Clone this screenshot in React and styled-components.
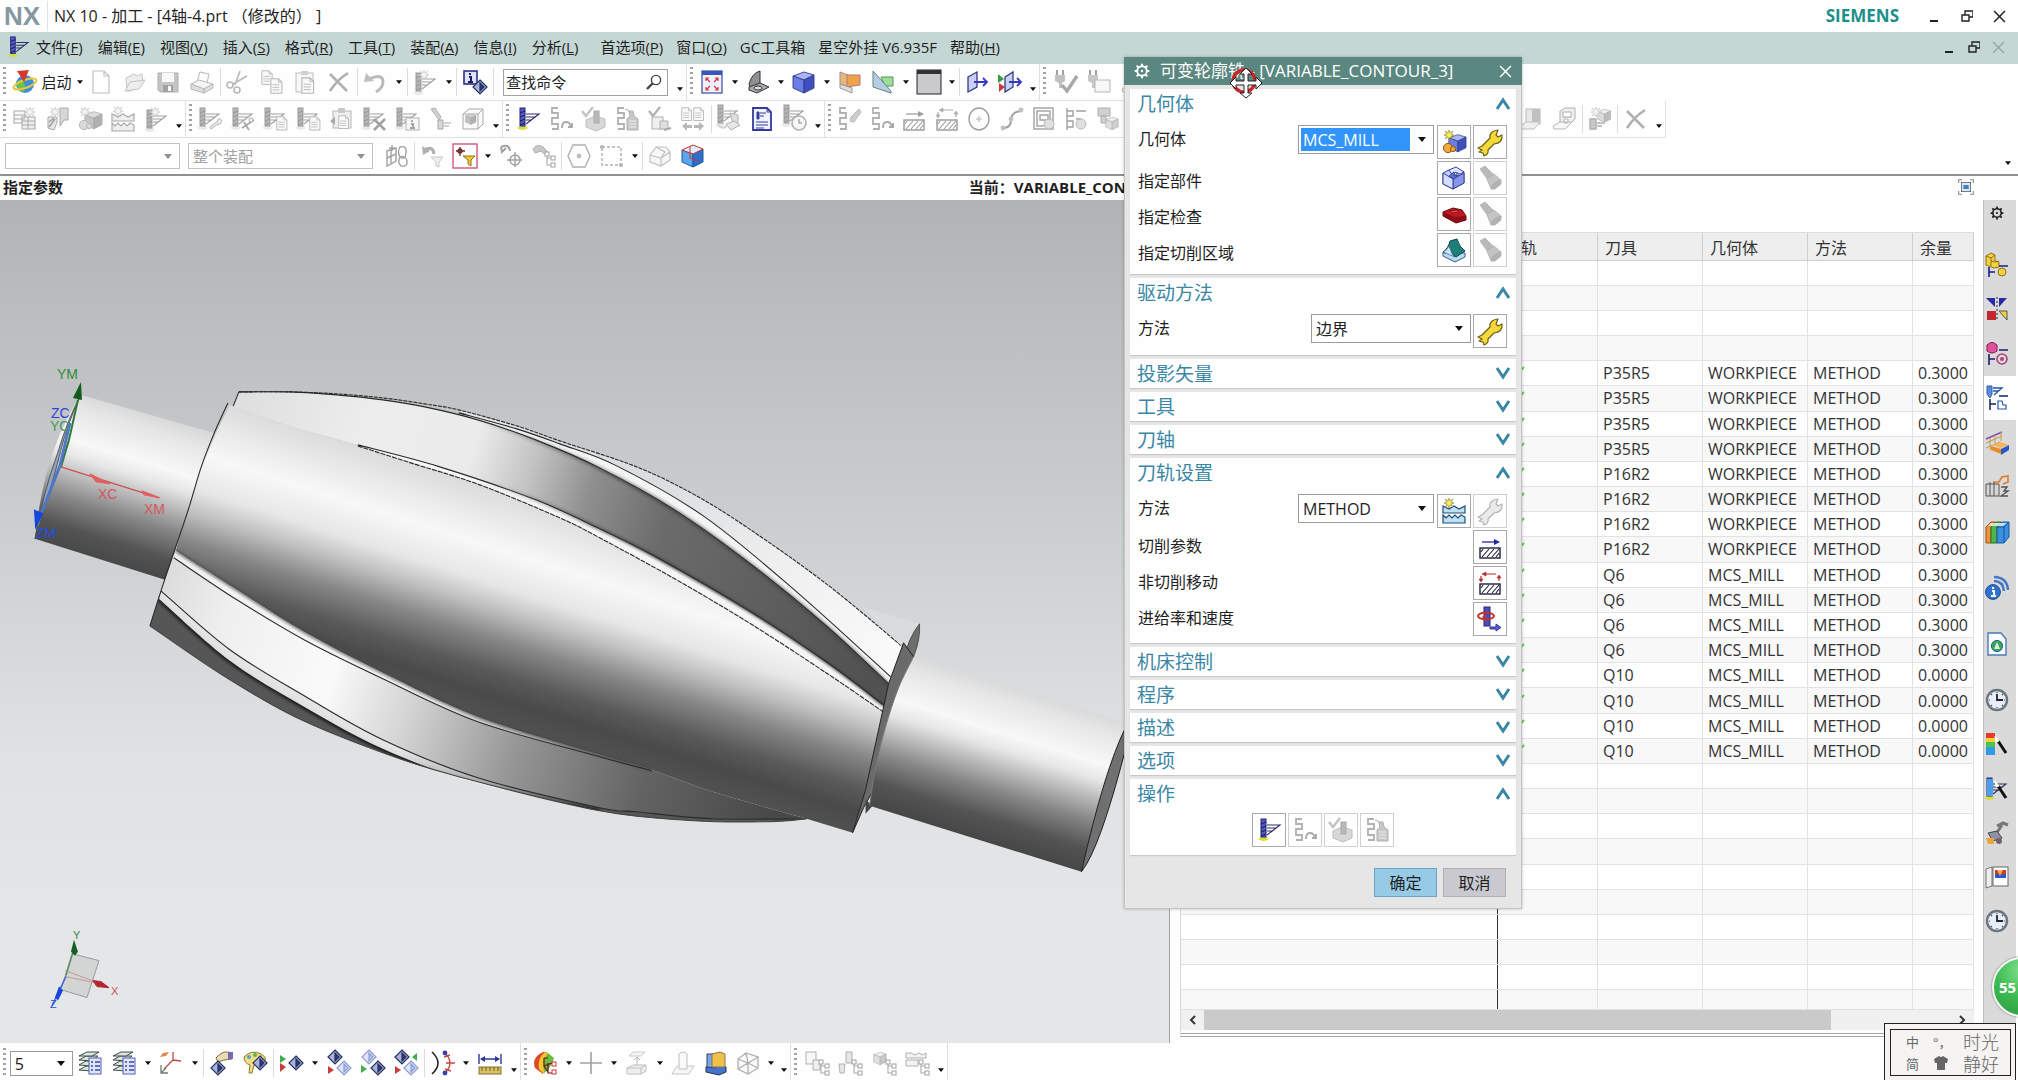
/**
*
* App
*
*/

import React from 'react';
import styled, { createGlobalStyle } from 'styled-components';

const GlobalStyle = createGlobalStyle`
  html, body, #root { height: 100%; }
  body {
    margin: 0;
    overflow: hidden;
    background: #fefefe;
    color: #1f1f1f;
    font: 16px/24px "Open Sans", "Noto Sans CJK SC", sans-serif;
  }
  *, *::before, *::after { box-sizing: border-box; }
  button, select, input { font: inherit; color: inherit; }
`;

/* ---------- icons ---------- */

const outline = { fill: 'none', stroke: '#333', strokeWidth: 1.4 };

const Mill = ({ x = 0, y = 0 }) => (
  <g transform={`translate(${x} ${y})`}>
    <path d="M1 21q6-5 11 0-5 4-11 0z" fill="#d9dc3c" />
    <rect x="4" y="1" width="5" height="18" fill="#5358c4" stroke="#23277a" strokeWidth="1" />
    <path d="M4 6l5-2M4 10l5-2M4 14l5-2M4 18l5-2" stroke="#171b55" strokeWidth="1" />
    <path d="M10 7h13L10 17M10 10h10M10 13h6" fill="none" stroke="#2b2f66" strokeWidth="1.1" />
  </g>
);

const SPath = () => (
  <path d="M9 1H3v5h6v5H3v6h6v5H3" {...outline} stroke="#555" strokeWidth="1.8" />
);

const Spark = ({ x = 0, y = 0 }) => (
  <path
    transform={`translate(${x} ${y})`}
    d="M5 0l1 3 3-2-2 3 3 1-3 1 2 3-3-2-1 3-1-3-3 2 2-3-3-1 3-1-2-3 3 2z"
    fill="#f6ee62"
    stroke="#9c9330"
    strokeWidth=".7"
  />
);

const Page = ({ x = 0, y = 0, s = 1 }) => (
  <g transform={`translate(${x} ${y}) scale(${s})`}>
    <path d="M1 1h9l4 4v13H1z" fill="#f2f4fb" stroke="#5a6080" strokeWidth="1.2" />
    <path d="M10 1v4h4M3 8h8M3 11h8M3 14h8" fill="none" stroke="#5a6080" strokeWidth="1" />
  </g>
);

const Cube = ({ x = 0, y = 0, s = 1, c = ['#a9b5f5', '#6b7de8', '#3f4fc0'] }) => (
  <g transform={`translate(${x} ${y}) scale(${s})`} stroke="#34407f" strokeWidth=".9" strokeLinejoin="round">
    <path d="M1 6l11-4 10 3-10 5z" fill={c[0]} />
    <path d="M1 6l11 4v13L1 18z" fill={c[1]} />
    <path d="M12 10l10-5v13l-10 5z" fill={c[2]} />
  </g>
);

const Diamond = ({ x = 0, y = 0, light }) => (
  <g transform={`translate(${x} ${y})`} stroke={light ? '#8d9bd0' : '#26305f'} strokeWidth="1.2">
    <path d="M7 0l7 7-7 7-7-7z" fill={light ? '#dfe6fb' : '#a8b2da'} />
    <path d="M7 3l4 4-4 4z" fill={light ? '#b9c8f2' : '#2f3d86'} />
  </g>
);

const Tree = ({ x = 0, y = 0 }) => (
  <g transform={`translate(${x} ${y})`} fill="#fff" stroke="#444" strokeWidth="1.1">
    <path d="M2 3v10h4M2 6h4" fill="none" />
    <rect x="0" y="0" width="4" height="4" />
    <rect x="6" y="4" width="4" height="4" />
    <rect x="6" y="11" width="4" height="4" />
  </g>
);

const Hatch = ({ y = 13 }) => (
  <g transform={`translate(0 ${y})`}>
    <rect x="2" y="0" width="20" height="10" fill="#fff" stroke="#1f1f3c" strokeWidth="1.4" />
    <path d="M4 9l7-8M9 9l7-8M14 9l7-8M18 9l3-4M3 4l2-3" stroke="#1f1f3c" strokeWidth="1.1" />
  </g>
);

const Layers = () => (
  <g>
    <g fill="#dbe7dc" stroke="#3b4b46" strokeWidth="1">
      <path d="M1 19l7-4h12l-6 5z" />
      <path d="M1 14l7-4h12l-6 5z" />
      <path d="M1 9l7-4h12l-6 5z" />
      <path d="M1 5l8-4h12l-7 4z" />
    </g>
    <rect x="11" y="7" width="12" height="16" fill="#dfe4fb" stroke="#5361b4" />
    <path d="M13 11h2M17 11h5M13 15h2M17 15h5M13 19h2M17 19h5" stroke="#3c4aa0" strokeWidth="1.4" />
  </g>
);

const Wrench = () => (
  <path
    d="M0 18l4-2 8-8q-1-7 8-8l-2 5 2 2 4-2q1 8-8 9l-6 6q1 4-4 6l-1-3-4-1 3-2z"
    fill="#f3d93a"
    stroke="#6f5f10"
    strokeWidth="1.2"
    strokeLinejoin="round"
  />
);

const ClockFace = () => (
  <g>
    <circle cx="12" cy="12" r="10" fill="#e7eef7" stroke="#6c7680" strokeWidth="2.4" />
    <path d="M12 4v1M12 19v1M4 12h1M19 12h1M6 6l1 1M17 6l1 1M6 18l1-1M17 18l1-1" stroke="#445" strokeWidth="1.2" />
    <path d="M12 6v6h6" fill="none" stroke="#223" strokeWidth="1.8" />
  </g>
);

const Wand = () => (
  <g>
    <path d="M13 9l8 12" stroke="#111" strokeWidth="3" />
    <path d="M10 4l4 5-3 1z" fill="#fff" stroke="#fff" />
  </g>
);

const icons = {
  globe: (
    <g>
      <circle cx="12" cy="14" r="9" fill="#3f8fd8" />
      <path d="M5 10q7 0 7 6t-4 6q-6-4-3-12z" fill="#6cc24a" />
      <ellipse cx="12" cy="14" rx="12" ry="4" fill="none" stroke="#e7c63b" strokeWidth="2" transform="rotate(-20 12 14)" />
      <path d="M4 1l12-1-5 12z" fill="#d63a2c" />
    </g>
  ),
  file: <path d="M4 1h11l5 5v17H4zM15 1v5h5" fill="#fff" stroke="#777" strokeWidth="1.2" />,
  open: (
    <g fill="#e9dcb4" stroke="#8a8060">
      <path d="M3 8l8-4 3 2 5-2 1 9-12 8H4z" />
      <path d="M2 21l5-9 15-2-6 9z" />
    </g>
  ),
  save: (
    <g>
      <path d="M2 3h20v19H4l-2-2z" fill="#7d828c" stroke="#555" />
      <rect x="6" y="3" width="12" height="9" fill="#f4f4f4" />
      <rect x="7" y="15" width="10" height="7" fill="#333" />
      <rect x="12" y="16" width="3" height="5" fill="#eee" />
    </g>
  ),
  print: (
    <g fill="#e8e8e8" stroke="#666">
      <path d="M7 12l3-10 9 2-2 9z" fill="#fff" />
      <path d="M1 14l8-4 14 4-9 5z" />
      <path d="M1 14v5l13 4v-4zM14 19v4l9-5v-4z" fill="#bbb" />
    </g>
  ),
  cut: (
    <g fill="none" stroke="#666" strokeWidth="1.6">
      <path d="M14 1L9 15M21 6L7 14" />
      <circle cx="4" cy="15" r="3" />
      <circle cx="11" cy="20" r="3" />
    </g>
  ),
  copy: <g><Page x={1} y={0} s={0.8} /><Page x={10} y={8} s={0.85} /></g>,
  paste: (
    <g>
      <rect x="3" y="3" width="17" height="19" fill="#eee" stroke="#777" />
      <rect x="8" y="1" width="7" height="4" fill="#999" />
      <Page x={8} y={7} s={0.9} />
    </g>
  ),
  del: <path d="M3 4l17 17M21 3Q10 10 3 21" fill="none" stroke="#555" strokeWidth="2.6" />,
  undo: (
    <g>
      <path d="M6 9q14-6 14 3 0 6-7 10" fill="none" stroke="#5d6c8c" strokeWidth="3" />
      <path d="M1 12l2-9 8 8z" fill="#5b77b4" />
    </g>
  ),
  millNew: <g><Mill x={-1} y={2} /><Spark x={6} y={0} /></g>,
  info: (
    <g>
      <rect x="1" y="1" width="13" height="13" fill="#dfe3fa" stroke="#2c2f88" strokeWidth="1.6" />
      <path d="M7 3v2M6 7h2v5M5 12h5" fill="none" stroke="#1a1d60" strokeWidth="2" />
      <Diamond x={10} y={10} />
    </g>
  ),
  fit: (
    <g>
      <rect x="2" y="1" width="20" height="22" fill="#eef0fb" stroke="#3b49a3" strokeWidth="1.2" />
      <rect x="2" y="1" width="20" height="4" fill="#3b56b4" />
      <path d="M6 11V8h3M6 8l4 4M18 11V8h-3M18 8l-4 4M6 17v3h3M6 20l4-4M18 17v3h-3M18 20l-4-4" fill="none" stroke="#d2393b" strokeWidth="1.2" />
    </g>
  ),
  orient: (
    <g stroke="#333" strokeWidth="1">
      <path d="M3 14Q6 3 14 1v15l-9 4z" fill="#8d9092" />
      <path d="M3 17l11-4 9 4-12 6-8-3z" fill="#a9acae" />
      <ellipse cx="12" cy="18" rx="4" ry="2" fill="#dfe0e1" />
    </g>
  ),
  shade: <Cube />,
  plane: (
    <g>
      <path d="M2 2l8 3v12l-8-3z" fill="#e6b878" stroke="#a88" />
      <path d="M9 5h13v10l-13 2z" fill="#eda34d" stroke="#b77" />
      <path d="M2 14l12 4v5L2 18z" fill="#ddd" stroke="#999" />
    </g>
  ),
  section: (
    <g>
      <path d="M10 7h12v9h-8z" fill="#9fdc9f" stroke="#4c9a4f" />
      <path d="M2 1l18 20v2L2 17z" fill="#b7cbe4" stroke="#5b8b7a" />
    </g>
  ),
  background: <g><rect x="0" y="0" width="24" height="24" fill="#c9cacb" stroke="#222" /><rect width="24" height="4" fill="#333" /></g>,
  clip: (
    <g>
      <path d="M3 7l9-5v15l-9 5z" fill="#c9d0f5" stroke="#333a7a" strokeWidth="1.3" />
      <path d="M9 12h12M18 8l4 4-4 4" fill="none" stroke="#3438c4" strokeWidth="1.8" />
    </g>
  ),
  clipEdit: (
    <g>
      <path d="M0 4l6 5-6 4z" fill="#3a9a44" />
      <path d="M1 13l6 4-6 5z" fill="#cf3b34" />
      <path d="M7 7l8-5v15l-8 5z" fill="#c9d0f5" stroke="#333a7a" strokeWidth="1.3" />
      <path d="M11 12h11M19 8l4 4-4 4" fill="none" stroke="#3438c4" strokeWidth="1.8" />
    </g>
  ),
  plugCheck: <g><path d="M3 0v5M9 0v5" stroke="#333" strokeWidth="2" /><path d="M1 5h10v6l-3 2v5H5v-5l-4-2z" fill="#777" /><path d="M8 15l5 6L23 6" fill="none" stroke="#444" strokeWidth="3.4" /></g>,
  plugBox: <g><path d="M3 0v5M9 0v5" stroke="#333" strokeWidth="2" /><path d="M1 5h10v6l-3 2v5H5v-5l-4-2z" fill="#888" /><rect x="8" y="10" width="15" height="12" fill="#eee" stroke="#666" /></g>,
  program: (
    <g>
      <Spark x={12} y={0} />
      <rect x="1" y="4" width="11" height="12" fill="#eee" stroke="#444" />
      <rect x="9" y="10" width="13" height="12" fill="#ddd" stroke="#444" />
      <path d="M1 8h11M1 12h11M9 14h13M9 18h13M15 10v12" stroke="#444" />
    </g>
  ),
  toolNew: (
    <g>
      <path d="M2 10h9v5l-3 8-6-2z" fill="#ccc" stroke="#444" />
      <path d="M3 20l6-8M3 15l5-4" stroke="#333" strokeWidth="1.6" />
      <path d="M14 1h8v12h-4l-4 6z" fill="#aaa" stroke="#444" />
      <Spark x={4} y={0} />
    </g>
  ),
  geomNew: <g><Cube x={6} y={3} s={0.82} /><circle cx="6" cy="18" r="4.6" fill="#f0a93a" stroke="#8d5b10" /><circle cx="11" cy="19" r="2.6" fill="#f0a93a" stroke="#8d5b10" /><Spark x={2} y={0} /></g>,
  methodNew: (
    <g>
      <path d="M1 7l6 3 5-3 5 3 6-3v7H1z" fill="#bfe1f5" stroke="#1f4d73" strokeWidth="1.2" />
      <path d="M1 16l3 3 3-3 3 3 3-3 3 3 3-3 4 2v6H1z" fill="#bfe1f5" stroke="#1f4d73" strokeWidth="1.2" />
      <Spark x={2} y={-1} />
    </g>
  ),
  millEdit: <g><Mill x={-3} /><path d="M11 20l8-6c-1-3 3-3 4 0-2 1 0 4-4 3l-7 5z" fill="#ddd" stroke="#555" /></g>,
  millCut: <g><Mill x={-3} /><path d="M10 21l12-8M12 15l5 8" stroke="#444" strokeWidth="1.8" /><circle cx="19" cy="13" r="2" fill="#fff" stroke="#444" /></g>,
  millCopy: <g><Mill x={-3} /><Page x={12} y={9} s={0.78} /></g>,
  millPaste: <g><rect x="3" y="4" width="18" height="17" fill="#ddd" stroke="#666" /><rect x="8" y="1" width="7" height="5" fill="#888" /><Page x={8} y={8} s={0.75} /><path d="M0 14l5-4v8z" fill="#444" /></g>,
  millDel: <g><Mill x={-3} /><path d="M11 12l11 11M22 12L11 23" stroke="#333" strokeWidth="2.6" /></g>,
  millInfo: <g><Mill x={-3} /><rect x="10" y="11" width="13" height="12" fill="#eee" stroke="#555" /><path d="M16 13v2M15 17h2v4M14 21h5" fill="none" stroke="#333" strokeWidth="1.8" /></g>,
  torch: (
    <g stroke="#4d506c" strokeWidth=".8">
      <path d="M2 3l5-3 9 9-6 5z" fill="#65687f" />
      <path d="M9 13l7-5 7 6v4l-6 5h-4z" fill="#7c8096" />
      <path d="M13 23q1-7 10-9-1 8-10 9z" fill="#54586e" />
    </g>
  ),
  millTorch: <g><path d="M3 2l4-1 6 9-2 3z" fill="#999" stroke="#555" /><path d="M10 13h5v9h-5zM16 16h7M16 19h5" fill="#aaa" stroke="#444" /></g>,
  stock: <g><path d="M2 7l6-5h14v15l-5 5H2zM2 7h15v15M17 7l5-5" fill="#f6f6f6" stroke="#444" /><Cube x={4} y={6} s={0.5} c={['#999', '#777', '#555']} /></g>,
  mill: <Mill />,
  gen: <g><SPath /><path d="M13 21q0-6 4-6t5 5M19 20h4v-4" fill="none" stroke="#444" strokeWidth="1.8" /></g>,
  verify: (
    <g>
      <path d="M4 13l9-4 10 3v8l-9 4-10-4z" fill="#c9a87c" stroke="#775" />
      <rect x="12" y="4" width="5" height="12" fill="#667" stroke="#445" />
      <path d="M0 4l4 5 7-9" fill="none" stroke="#4a9a3e" strokeWidth="2.6" />
    </g>
  ),
  post: <g><SPath /><path d="M12 12l3-3-1-5h4l1 5 4 3v11H12z" fill="#888" stroke="#555" /><path d="M10 2q4 0 5 4" fill="none" stroke="#555" /><path d="M14 14h7M14 17h7M14 20h7" stroke="#ddd" /></g>,
  verifyPage: <g><path d="M1 4l4 5 7-9" fill="none" stroke="#555" strokeWidth="2.2" /><rect x="4" y="10" width="11" height="12" fill="#ddd" stroke="#555" /><path d="M12 14h8v8h-8z" fill="#bbb" stroke="#555" /><path d="M16 23l7-2" stroke="#444" strokeWidth="2" /></g>,
  compare: <g><Page x={0} y={0} s={0.75} /><Page x={12} y={0} s={0.75} /><path d="M1 19l5-4v3h5v3H6v3zM23 19l-5-4v3h-5v3h5v3z" fill="#666" /></g>,
  shop: <g><Mill x={-3} y={-3} /><path d="M13 6l8 2v8l-5 1z" fill="#bbb" stroke="#555" /><path d="M9 17l8-3 6 4-9 5z" fill="#ccc" stroke="#555" /><path d="M1 18q4 5 9 1" fill="none" stroke="#b79b4a" strokeWidth="2" /></g>,
  doc: (
    <g>
      <path d="M3 1h14l4 4v18H3z" fill="#f0f2ff" stroke="#333a9a" strokeWidth="1.8" />
      <path d="M17 1v4h4M6 15h12M6 18h12M6 21h8" fill="none" stroke="#333a9a" strokeWidth="1" />
      <path d="M7 5h2v7H7zM10 6h6M10 9h4" fill="#333a9a" stroke="#333a9a" />
    </g>
  ),
  millClock: <g><Mill x={-3} y={-3} /><circle cx="16" cy="16" r="7" fill="#eee" stroke="#555" strokeWidth="1.6" /><path d="M16 12v4h3" fill="none" stroke="#444" strokeWidth="1.4" /></g>,
  pathTorch: <g><SPath /><path d="M22 2l-8 8-1 4 4 1 7-10z" fill="#8d93bb" stroke="#5c6192" /></g>,
  cutParam: <g><Hatch /><path d="M4 7h14" fill="none" stroke="#24249c" strokeWidth="1.3" /><path d="M16 4l6 3-6 3z" fill="#24249c" /></g>,
  nonCut: <g><Hatch /><path d="M3 9V5M6 3h12M21 10V6" fill="none" stroke="#b32a2a" strokeWidth="1.2" /><path d="M1 8l2 3 2-3zM8 1L4 3l4 2zM19 7l2-3 2 3z" fill="#b32a2a" stroke="#b32a2a" strokeWidth=".6" /></g>,
  feeds: (
    <g>
      <rect x="6" y="0" width="6" height="19" fill="#4a4fb8" stroke="#23277a" />
      <ellipse cx="8" cy="9" rx="8" ry="3.4" fill="none" stroke="#c2332f" strokeWidth="2" />
      <path d="M4 10l4 5 0-8z" fill="#c2332f" />
      <path d="M12 20h6v-3l5 3.500-5 3.500v-2h-6z" fill="#5a5fd0" stroke="#333a9a" />
    </g>
  ),
  circle: <g><ellipse cx="12" cy="12" rx="10" ry="11" {...outline} /><path d="M12 9v6M9 12h6" stroke="#a98a2f" strokeWidth="1.6" /></g>,
  spline: <g><path d="M3 21q8 0 8-8t10-9" {...outline} strokeWidth="2" /><circle cx="3" cy="21" r="2.4" fill="#875" /><circle cx="21" cy="3" r="2.4" fill="#875" /><circle cx="11" cy="12" r="2.4" fill="#875" /></g>,
  pocket: <g><rect x="2" y="1" width="19" height="21" {...outline} /><rect x="5" y="4" width="13" height="15" {...outline} /><path d="M8 8h8v5H8z" {...outline} /><circle cx="17" cy="17" r="5" fill="#bbb" stroke="#666" /></g>,
  levels: <g><path d="M3 1v22M3 4h6v5H3M3 14h6v6H3M12 4h10M12 12h5" {...outline} /><circle cx="17" cy="17" r="5" fill="#bbb" stroke="#666" /></g>,
  gouge: <g><Cube x={8} y={9} s={0.6} c={['#ddd', '#bbb', '#999']} /><path d="M1 1h12v8H1zM4 9v7h5V9z" fill="#999" stroke="#555" /></g>,
  machine: <g><rect x="7" y="2" width="14" height="15" fill="#ccc" stroke="#666" /><rect x="13" y="2" width="8" height="15" fill="#777" /><path d="M1 19l6-4h14l-6 7H3z" fill="#ddd" stroke="#777" /></g>,
  simulate: <g><path d="M8 4l5-3h10v11l-4 4H8z" fill="#ddd" stroke="#555" /><rect x="11" y="5" width="8" height="5" fill="#fff" stroke="#644" /><path d="M12 12h4v4h-4zM1 19l7-4h12l-7 7H2z" fill="#eee" stroke="#666" /></g>,
  featureNew: <g><Cube x={9} y={1} s={0.62} c={['#cde', '#9bb', '#577']} /><Spark x={3} y={0} /><path d="M2 12h6v10H2zM9 16h8M9 19h5" fill="#888" stroke="#555" strokeWidth="1.4" /></g>,
  sketchLink: <g><path d="M2 7l9-3v13l-9 5zM2 14l9-4M6 5v15M7 1v6M4 4h7" {...outline} /><path d="M15 3q7-2 6 6t-6 4q-3-5 0-10zM15 13q6-2 7 4t-6 5q-4-4-1-9z" {...outline} /></g>,
  filterUndo: <g><path d="M2 2l1 9 7-4z" fill="#555" /><path d="M4 6q9-5 10 4" fill="none" stroke="#555" strokeWidth="3" /><path d="M11 13h12l-4 5v5l-3-1v-4z" fill="#ddd" stroke="#888" /></g>,
  filter: (
    <g>
      <rect x="0" y="0" width="24" height="24" fill="#fff" stroke="#d0587c" strokeWidth="1.4" />
      <path d="M7 3v9M3 7h9M5 7a2 2 0 0 0 4 0 2 2 0 0 0-4 0" fill="none" stroke="#702a2a" strokeWidth="1.3" />
      <path d="M10 12h12l-4 4v6l-3-2v-4z" fill="#f0c93a" stroke="#8c7218" />
    </g>
  ),
  snapBack: <g><path d="M2 3q8-4 9 4M2 3l1 5 4-4" {...outline} strokeWidth="2" /><circle cx="16" cy="16" r="5" {...outline} /><path d="M16 8v15M8 16h15" {...outline} /></g>,
  snapTree: <g><path d="M1 5q4-6 10-2l4 4-3 3-3-3-6 2z" fill="#888" stroke="#555" /><Tree x={13} y={8} /></g>,
  hexagon: <g><path d="M6 1h12l5 11-5 11H6L1 12z" fill="#fff" stroke="#555" strokeWidth="1.4" /><circle cx="12" cy="12" r="2.4" fill="#a66" /></g>,
  lasso: <g><rect x="2" y="3" width="19" height="18" fill="none" stroke="#555" strokeDasharray="3 2" strokeWidth="1.4" /><circle cx="2" cy="3" r="2" fill="#755" /><circle cx="21" cy="21" r="2" fill="#755" /></g>,
  solidEdge: <path d="M2 11l6-8h10l4 5v8l-9 6-11-4zM2 11l11 3 9-6M13 14v8M8 3l9 5-4 6" fill="#eee" stroke="#777" strokeWidth="1.2" />,
  boxWire: (
    <g>
      <path d="M1 6l11 4v13L1 18z" fill="#5aa7ee" stroke="#205b9c" />
      <path d="M12 10l10-5v13l-10 5z" fill="#2f6fcb" stroke="#205b9c" />
      <path d="M1 6l11-5 10 4-10 5z" fill="#dfeefb" stroke="#b33" />
      <path d="M9 2v12l8 3" fill="none" stroke="#c33" strokeWidth="1" />
    </g>
  ),
  layers: <Layers />,
  wcs: <g><path d="M14 9l8 1M14 9V1M14 9L5 18" fill="none" stroke="#c24b43" strokeWidth="1.3" /><path d="M2 14v8h7M2 22l5-5" fill="none" stroke="#6d7a73" strokeWidth="1.3" /><path d="M1 6l3-4 6-1-3 4z" fill="#e08850" /></g>,
  showHand: <g><path d="M6 7q6-7 12-6l4 1v6l-8 1-6 2z" fill="#e9dcb0" stroke="#867040" /><rect x="18" y="1" width="5" height="7" fill="#7569b5" /><Diamond x={1} y={10} /></g>,
  palette: <g><path d="M1 6q8-8 17-3t0 10l-7 1-2 8H6l1-8Q1 12 1 6z" fill="#f0df82" stroke="#8a7b2c" /><circle cx="6" cy="6" r="2" fill="#4aa5d8" /><circle cx="12" cy="4" r="2" fill="#57b35b" /><Diamond x={10} y={5} /></g>,
  moveObj: <g><path d="M0 4l6 4-6 4z" fill="#3fae4d" /><path d="M0 12l6 4-6 5z" fill="#c63f3a" /><Diamond x={9} y={5} /></g>,
  hideObj: <g><Diamond x={1} y={-1} /><Diamond x={10} y={10} light /><path d="M1 15l6 4-6 4z" fill="#c63f3a" /></g>,
  showObj: <g><Diamond x={1} y={-1} light /><Diamond x={10} y={10} /><path d="M0 14l6 4-6 4z" fill="#3fae4d" /></g>,
  swapObj: <g><Diamond x={1} y={-1} /><Diamond x={10} y={10} light /><path d="M1 15l6 4-6 4z" fill="#c63f3a" /><path d="M23 2l-5 4 5 4z" fill="#3fae4d" /></g>,
  curve: <g><path d="M1 1q12 11 0 22" fill="none" stroke="#222" strokeWidth="1.6" /><path d="M13 1q12 11 0 22M13 6l6-2M14 18l6 2M15 12h9" fill="none" stroke="#c24b43" strokeWidth="1.4" /><circle cx="14" cy="2" r="2.4" fill="#3a3fb0" /><circle cx="14" cy="22" r="2.4" fill="#3a3fb0" /></g>,
  measure: <g><path d="M1 3v10M23 3v10M3 8h18" fill="none" stroke="#33379c" strokeWidth="1.4" /><path d="M7 5L2 8l5 3zM17 5l5 3-5 3z" fill="#33379c" /><rect x="1" y="16" width="22" height="7" fill="#d8c163" stroke="#837030" /><path d="M4 16v4M8 16v4M12 16v4M16 16v4M20 16v4" stroke="#6b5a20" /></g>,
  analysis: (
    <g>
      <path d="M9 1q-12 6-8 16l8 6q3-10 4-22z" fill="#e0482c" />
      <path d="M11 1q-8 6-6 17l5 5q7-8 6-20z" fill="#f2c933" />
      <path d="M14 2q-6 7-4 20 8-6 10-15z" fill="#6fbb3c" />
      <path d="M10 7v8l4 6M10 15l8-3M14 12v10h8M10 7h4" fill="none" stroke="#612" strokeWidth="1.2" />
      <rect x="18" y="11" width="4" height="4" fill="#fff" stroke="#c33" />
      <rect x="18" y="19" width="4" height="4" fill="#fff" stroke="#c33" />
    </g>
  ),
  plus: <path d="M12 1v22M1 12h22" stroke="#333" strokeWidth="1.6" />,
  extrude: <g><path d="M4 5l4-4h12l-4 4z" fill="#f4e7dc" stroke="#a88" /><path d="M12 6v8M9 9l3-3 3 3" fill="none" stroke="#567" /><path d="M2 17l6-3h13v6l-5 3H2zM2 17h14v6M16 17l5-3" fill="#ddd" stroke="#777" /></g>,
  boss: <g><path d="M1 23l5-8h17l-5 8z" fill="#eee" stroke="#888" /><path d="M8 3v15h8V3q-4-4-8 0z" fill="#f4f4f4" stroke="#777" /></g>,
  blockBody: <g><path d="M2 16l6-3 14 3v5l-7 3-13-3z" fill="#4574cf" stroke="#234" /><path d="M3 3h9v14l-9-1z" fill="#7ba6ea" stroke="#345" /><path d="M8 3l8-2 5 2v13H8z" fill="#efc04a" stroke="#875" /></g>,
  meshBody: <path d="M2 8l8-6 12 4v11l-10 6L2 18zM2 8l10 4 10-6M12 12v11M2 18l10-6M12 12l10 5M10 2l2 10" fill="#f4f4f4" stroke="#555" strokeWidth="1.3" />,
  viewProgram: <g><rect x="1" y="1" width="10" height="12" fill="#eee" stroke="#555" /><path d="M8 9h7v10H8z" fill="#ddd" stroke="#555" /><Tree x={14} y={9} /></g>,
  viewTool: <g><path d="M8 1h6v11H8zM1 13h6l-1 9H2z" fill="#ccc" stroke="#555" /><Tree x={14} y={9} /></g>,
  viewGeom: <g><Cube x={1} y={0} s={0.6} c={['#ddd', '#bbb', '#888']} /><Tree x={14} y={9} /></g>,
  viewMethod: <g><path d="M1 2v5h20V2l-3 2-4-2-4 2-4-2zM1 9v6h12V9z" fill="#e6e6e6" stroke="#555" /><Tree x={14} y={9} /></g>,
  wrench: <Wrench />,
  part: (
    <g stroke="#39459c" strokeWidth="1" strokeLinejoin="round">
      <path d="M1 7l6-3 4 2v4l4-2V3l7 3v11l-11 6-10-5z" fill="#c5cffa" />
      <path d="M11 13l11-6v10l-11 6z" fill="#8796ea" />
      <path d="M1 7l10 6v10L1 18z" fill="#d5dcfc" />
      <path d="M7 4l7-3 8 5-4 2-5-2-2 4z" fill="#e2e7fd" />
      <path d="M7 10l5-4v4l5-1-5 4z" fill="#6273d8" />
    </g>
  ),
  check: <g><path d="M1 10l10-4 9 2 4 6v4l-10 3-13-7z" fill="#c31822" stroke="#5d0a10" /><path d="M1 10l12 5 11-1v4l-10 3L1 14z" fill="#8d0d15" /><path d="M8 9l7-1 2 2-7 1z" fill="#e0434a" stroke="#5d0a10" strokeWidth=".6" /></g>,
  cutArea: <g><path d="M1 14v4l12 6 10-5v-4z" fill="#bcd9f2" stroke="#2f5f8d" /><path d="M1 14q5-3 7-11l7-2q2 8 8 12l-9 6q-5-3-7-8-2 6-6 3z" fill="#1d8078" stroke="#0d4844" /><path d="M1 14q4-2 6-6l2 5q1 4 4 6z" fill="#cfe3f6" stroke="#2f5f8d" strokeWidth=".7" /></g>,
  gear: (
    <g>
      <path d="M12 1v22M1 12h22M4 4l16 16M20 4L4 20" stroke="currentColor" strokeWidth="3" />
      <circle cx="12" cy="12" r="8.6" fill="currentColor" />
      <circle cx="12" cy="12" r="5.8" fill="var(--hole)" />
      <circle cx="12" cy="12" r="1.8" fill="currentColor" />
    </g>
  ),
  assembly: <g><path d="M1 3l5-3 4 2v6l4 1v5l-5 1-8-3z" fill="#f2cf3e" stroke="#8e7613" /><path d="M1 3l5 2v8M6 5l4-3M6 8l4 1 4-1" fill="none" stroke="#8e7613" /><path d="M4 14v10M4 19h6M14 13h9" stroke="#1c1c8c" strokeWidth="1.6" /><circle cx="17" cy="19" r="4" fill="#f2cf3e" stroke="#8e7613" /></g>,
  constraint: <g><path d="M1 1l9 9V1zM22 1l-8 9v-9z" fill="#2a2aa6" /><path d="M12 0v24" stroke="#222" strokeDasharray="2 2" /><path d="M2 14h9v9H2z" fill="#c3262c" /><path d="M14 14h8v9z" fill="#f2cf3e" stroke="#555" /></g>,
  partNav: <g><path d="M2 4q5-5 10 0v6q-5 4-10 0z" fill="#e0529a" stroke="#7d1d50" /><path d="M14 9h9M4 13v11M4 18h6" stroke="#1c1c6c" strokeWidth="1.6" /><circle cx="17" cy="18" r="5" fill="none" stroke="#b0417d" strokeWidth="1.6" /><circle cx="17" cy="18" r="2" fill="#b0417d" /></g>,
  opNav: <g><path d="M2 0h5v8l-2 4-3-4z" fill="#5b8fdd" stroke="#2a5cae" /><path d="M8 2h9l-8 7M8 5h6" fill="none" stroke="#2555a8" strokeWidth="1.3" /><path d="M14 10h9M5 13v11M5 18h6" fill="none" stroke="#12225a" strokeWidth="1.5" /><path d="M13 15h4l1 4h3v4h-8z" fill="none" stroke="#2555a8" strokeWidth="1.2" /></g>,
  feature: <g><path d="M1 8l16-7" stroke="#8750a6" strokeWidth="1.6" /><path d="M1 12l16-7M1 17l14-6M5 7v12M10 4v10M16 1v9" stroke="#c79a52" fill="none" strokeWidth="1" /><path d="M8 14l8-3 8 3-9 3z" fill="#f9b35a" /><path d="M6 15l10 3v5l-10-4z" fill="#e8892a" /><path d="M16 18v6l8-5v-5z" fill="#2c57c4" /></g>,
  machineNav: <g><path d="M8 7h6l3-5 6-1v6l-5 2" fill="none" stroke="#e07a2a" strokeWidth="1.6" /><path d="M1 9h13v12H1zM5 7v14M9 7v14" fill="#d5d5d5" stroke="#555" /><path d="M16 12h6l-3 4h4l-7 5h7" fill="none" stroke="#555" strokeWidth="1.4" /></g>,
  books: <g><path d="M1 7l5-5h4L6 7v16H1z" fill="#f2913a" stroke="#9c5310" /><path d="M6 7l5-5h5l-4 5v16H6z" fill="#4cb748" stroke="#22702a" /><path d="M12 7l5-5h7v15l-5 6h-7z" fill="#3a8fe0" stroke="#1b579c" /><path d="M6 3h16l-4 3H3z" fill="#f2f2f2" opacity=".8" /><path d="M12 7h7v15M19 7l5-5" fill="none" stroke="#1b579c" /></g>,
  feed: <g><circle cx="8" cy="16" r="7.4" fill="#2f72cf" stroke="#1d4c93" /><path d="M8 11v2M7 15h2v5M6 20h5" fill="none" stroke="#fff" strokeWidth="2" /><path d="M9 5q9 0 10 10M9 1q13 0 14 13" fill="none" stroke="#4877c4" strokeWidth="2.4" /></g>,
  web: <g><path d="M3 1h13l5 6v16H3z" fill="#fafcff" stroke="#4a7ab5" strokeWidth="1.4" /><circle cx="12" cy="14" r="5.6" fill="#3ea35a" stroke="#1c6a8f" /><path d="M9 17l3-7 3 7z" fill="#d8efe0" /></g>,
  clock: <ClockFace />,
  spectrum: <g><rect x="1" y="1" width="9" height="6" fill="#e8392e" /><rect x="1" y="6" width="9" height="5" fill="#f3d32f" /><rect x="1" y="10" width="9" height="6" fill="#48c54a" /><rect x="1" y="15" width="9" height="8" fill="#2d9be8" /><Wand /></g>,
  millWand: <g><Mill x={-2} /><rect x="2" y="2" width="6" height="17" fill="#4a9fe8" /><Wand /></g>,
  robot: <g><path d="M12 5l6-3 5 2M17 4l-6 9" fill="none" stroke="#777" strokeWidth="3" /><path d="M3 12l9-2 5 7-9 3z" fill="#8d93a3" stroke="#445" /><path d="M1 17h8v6H3z" fill="#e9a43c" /><circle cx="14" cy="20" r="3" fill="#7a5f70" /></g>,
  roles: <g><path d="M1 4l6-2v19l-6 2z" fill="#eee" stroke="#777" /><rect x="8" y="2" width="15" height="19" fill="#fff" stroke="#666" /><rect x="10" y="5" width="11" height="4" fill="#d6352b" /><rect x="10" y="9" width="11" height="4" fill="#2d58c9" /><path d="M12 5h6l-3 6z" fill="#f4b13a" /></g>,
  dock: <g><path d="M1 6V1h5M18 1h5v5M1 18v5h5M23 18v5h-5" fill="none" stroke="#888" strokeWidth="1.6" /><rect x="5" y="5" width="14" height="14" fill="#dbe8f7" stroke="#345" /><rect x="8" y="9" width="8" height="6" fill="#4d80bd" /></g>,
};

const Svg = styled.svg`
  display: block;
  flex: none;
  overflow: visible;
  filter: ${p => (p.$off ? 'grayscale(1) opacity(0.46)' : 'none')};
`;

const Icon = ({ name, off, size = 24 }) => (
  <Svg viewBox="0 0 24 24" width={size} height={size} $off={off} aria-hidden="true">{icons[name]}</Svg>
);

/* ---------- top chrome ---------- */

const Screen = styled.div`
  display: flex;
  flex-direction: column;
  height: 100vh;
  position: relative;
  overflow: hidden;
`;

const TitleBar = styled.header`
  display: flex;
  align-items: center;
  height: 32px;
  padding: 0 3px 0 4px;
`;

const Logo = styled.span`
  width: 44px;
  margin-right: 6px;
  border-right: 1px solid #e2e2e2;
  color: #8597a1;
  font: 700 26px/30px "Liberation Sans", sans-serif;
`;

const Title = styled.h1`
  margin: 0;
  flex: 1;
  font-size: 16px;
  font-weight: 400;
  white-space: pre;
`;

const Brand = styled.span`
  color: #1b8f8a;
  font-size: 17px;
  font-weight: 700;
  margin-right: 20px;
`;

const WindowButton = styled.button`
  display: grid;
  place-items: center;
  width: ${p => (p.$narrow ? 24 : 32)}px;
  height: 28px;
  padding: 0;
  border: 0;
  background: none;
  color: ${p => (p.$faint ? '#98a8a7' : '#222')};
`;

const MenuBar = styled.nav`
  display: flex;
  align-items: center;
  height: 32px;
  padding: 0 8px 2px 7px;
  background: #c5d7d5;
`;

const MenuList = styled.div`
  display: flex;
  flex: 1;
  padding-left: 7px;
`;

const MenuItem = styled.button`
  padding: 0;
  margin-right: ${p => p.$gap}px;
  border: 0;
  background: none;
  font-size: 15px;
  white-space: nowrap;
`;

const Spacer = styled.span`
  flex: 1;
`;

const Grip = styled.span`
  flex: none;
  width: 3px;
  height: 30px;
  margin: 0 2px 0 3px;
  background: repeating-linear-gradient(#a2a2a2 0 2px, transparent 2px 5px);
`;

const Bar = styled.div`
  display: flex;
  height: 37px;
`;

const Group = styled.div`
  display: flex;
  flex: none;
  align-items: center;
  justify-content: space-between;
  width: ${p => p.$w}px;
  padding-top: ${p => (p.$bottom ? 3 : 0)}px;
  border-right: 1px solid #e0e0e0;
  border-bottom: ${p => (p.$bottom ? '0' : '1px solid #e0e0e0')};
`;

const ToolButton = styled.button`
  display: grid;
  place-items: center;
  flex: none;
  width: 32px;
  height: 32px;
  padding: 0;
  border: 0;
  background: none;
`;

const StartButton = styled(ToolButton)`
  display: flex;
  align-items: center;
  gap: 5px;
  width: 74px;
  padding-left: 3px;
  font-size: 15px;
`;

const Divider = styled.span`
  flex: none;
  width: 1px;
  height: 28px;
  background: #dcdcdc;
`;

const CaretButton = styled.button`
  display: grid;
  place-items: center;
  flex: none;
  width: 12px;
  height: 32px;
  padding: ${p => (p.$low ? '14px 0 0' : '0')};
  border: 0;
  background: none;
`;

const Caret = ({ color = '#111', w = 6 }) => (
  <svg width={w} height={w === 6 ? 4 : 5} viewBox="0 0 8 5" aria-hidden="true"><path d="M0 0h8L4 5z" fill={color} /></svg>
);

const SearchBox = styled.label`
  display: flex;
  flex: none;
  align-items: center;
  width: 165px;
  height: 27px;
  padding: 0 5px 0 2px;
  margin: 0 4px 0 8px;
  border: 1px solid #a3a3a3;
  background: #fff;
`;

const SearchInput = styled.input`
  flex: 1;
  min-width: 0;
  padding: 0;
  border: 0;
  outline: 0;
  background: none;
  font-size: 15px;

  &::placeholder { color: #222; opacity: 1; }
`;

const SelectWrap = styled.span`
  position: relative;
  display: flex;
  flex: none;
  align-items: center;
  width: ${p => p.$w}px;
  height: ${p => p.$h || 29}px;
  border: 1px solid ${p => (p.$off ? '#c2c2c2' : '#9b9b9b')};
  background: #fff;
  color: ${p => (p.$off ? '#a0a0a0' : '#222')};

  svg {
    position: absolute;
    right: 7px;
    pointer-events: none;
  }
`;

const NativeSelect = styled.select`
  appearance: none;
  width: 100%;
  height: 100%;
  padding: 0 22px 0 4px;
  border: 0;
  outline: 0;
  opacity: 1;
  background: ${p => (p.$picked ? 'linear-gradient(#3295fc, #3295fc) 2px center / calc(100% - 25px) 23px no-repeat' : 'none')};
  color: ${p => (p.$picked ? '#fff' : 'inherit')};
  font-size: ${p => p.$size || 16}px;
`;

const Dropdown = ({ label, id, value, w, h, off, picked, size }) => (
  <SelectWrap $w={w} $h={h} $off={off}>
    <NativeSelect id={id} aria-label={label} disabled={off} $picked={picked} $size={size}>
      <option>{value}</option>
    </NativeSelect>
    <Caret color={off ? '#909090' : '#111'} w={8} />
  </SelectWrap>
);

/* a leading "~" marks a greyed-out command */
const Tools = ({ items }) => items.map((item, i) => {
  if (item === '|') return <Divider key={i} />;
  if (item === 'v' || item === 'V') {
    return <CaretButton key={i} $low={item === 'V'} aria-label="More"><Caret /></CaretButton>;
  }
  const off = item[0] === '~';
  const name = off ? item.slice(1) : item;
  return <ToolButton key={i} aria-label={name}><Icon name={name} off={off} /></ToolButton>;
});

const menus = [
  ['文件', 'F', 15], ['编辑', 'E', 15], ['视图', 'V', 15], ['插入', 'S', 15], ['格式', 'R', 15], ['工具', 'T', 15], ['装配', 'A', 15],
  ['信息', 'I', 15], ['分析', 'L', 22], ['首选项', 'P', 13], ['窗口', 'O', 13], ['GC工具箱', '', 13], ['星空外挂 V6.935F', '', 13], ['帮助', 'H', 0],
];

const standardTools = ['~file', '~open', '~save', '~print', '|', '~cut', '~copy', '~paste', '~del', '|', '~undo', 'v', '|', '~millNew', 'v', '|', 'info', '|'];
const viewTools = ['fit', 'v', 'orient', 'v', 'shade', 'v', 'plane', 'section', 'v', 'background', 'v', '|', 'clip', 'clipEdit', 'V'];
const plugTools = ['~plugCheck', '~plugBox', '~simulate'];
const insertTools = ['~program', '~toolNew', '~geomNew', '~methodNew', '~millNew', 'V'];
const editTools = ['~millEdit', '~millCut', '~millCopy', '~millCopy', '~millPaste', '~millDel', '~millInfo', '~millTorch', '~stock', 'V'];
const opTools = ['mill', '~gen', '~verify', '~post', '~verifyPage', '~compare', '|', '~shop', 'doc', '~millClock', 'V'];
const pathTools = ['~pathTorch', '~gen', '~cutParam', '~nonCut', '~circle', '~spline', '~pocket', '~levels', '~gouge', '~pocket', '~levels', '~gouge', '~machine', '~simulate', '~stock', '~pocket', '~levels', '~gouge', '~machine', '~simulate', '~stock'];
const machineTools = ['~machine', '~simulate', '|', '~featureNew', '|', '~del', 'V'];
const selectionTools = ['~sketchLink', '|', '~filterUndo', 'filter', 'v', '~snapBack', '~snapTree', '|', '~hexagon', '~lasso', 'v', '|', '~solidEdge', 'boxWire'];

const WinGlyph = ({ kind, size = 12 }) => (
  <svg width={size} height={size} viewBox="0 0 12 12" fill="none" stroke="currentColor" strokeWidth="1.4" aria-hidden="true">
    {kind === 'min' && <path d="M1 11h8" strokeWidth="2" />}
    {kind === 'max' && <path d="M1 5h7v6H1zM4 5V1h8v6H8" />}
    {kind === 'close' && <path d="M1 1l10 10M11 1L1 11" />}
  </svg>
);

const WindowButtons = ({ inner }) => (
  <React.Fragment>
    <WindowButton $narrow={inner} aria-label="Minimize"><WinGlyph kind="min" /></WindowButton>
    <WindowButton $narrow={inner} aria-label="Restore"><WinGlyph kind="max" /></WindowButton>
    <WindowButton $narrow={inner} aria-label="Close" $faint={inner}><WinGlyph kind="close" size={13} /></WindowButton>
  </React.Fragment>
);

const SelectionBar = styled.div`
  display: flex;
  align-items: center;
  gap: 8px;
  height: 38px;
  padding: 0 4px 0 5px;
  border-bottom: 2px solid #8d918f;
`;

const SelectionTools = styled.div`
  display: flex;
  align-items: center;
  gap: 1px;
`;

const CueLine = styled.div`
  display: flex;
  align-items: center;
  height: 24px;
  padding: 0 44px 2px 3px;
  font-size: 15px;
  font-weight: 700;
`;

const Cue = styled.span`
  flex: 0 0 49%;
`;

/* ---------- model view ---------- */

const Main = styled.main`
  display: flex;
  flex: 1;
  min-height: 0;
`;

const Viewport = styled.section`
  flex: 0 0 58%;
  min-width: 0;
  overflow: hidden;
  border-right: 1px solid #9da3a5;
  background: linear-gradient(#b2b3b4 0%, #bdbfc0 17%, #cdd0d1 41%, #dfe1e2 65%, #e4e6e8 85%, #e4e6e8 100%);
`;

const Scene = styled.svg`
  display: block;
  width: 100%;
  height: 100%;
`;

const Stops = ({ list }) => list.map(([o, c]) => <stop key={o} offset={o} stopColor={c} />);

/* smooth curve through a list of points */
const through = (pts, start = 'M') => {
  let d = `${start}${pts[0].join(' ')}`;
  for (let i = 0; i < pts.length - 1; i += 1) {
    const a = pts[i - 1] || pts[i];
    const b = pts[i];
    const c = pts[i + 1];
    const e = pts[i + 2] || c;
    const c1 = [b[0] + ((c[0] - a[0]) / 6), b[1] + ((c[1] - a[1]) / 6)];
    const c2 = [c[0] - ((e[0] - b[0]) / 6), c[1] - ((e[1] - b[1]) / 6)];
    d += `C${c1.join(' ')} ${c2.join(' ')} ${c.join(' ')}`;
  }
  return d;
};
const between = (top, bottom) => `${through(top)}${through([...bottom].reverse(), 'L')}z`;

const crestTop = [[239, 392], [291, 392], [337, 394], [383, 398], [425, 404], [459, 410], [517, 426], [560, 441], [637, 467], [695, 495], [751, 530], [828, 585], [903, 647]];
const crestIn = [[459, 413], [517, 429], [560, 444], [617, 466], [705, 517], [797, 592], [891, 677]];
const crestLow = [[239, 392], [291, 392], [337, 395], [383, 400], [425, 407], [478, 420], [536, 440], [600, 468], [675, 510], [751, 564], [828, 627], [889, 684]];
const landTop = [[233, 407], [293, 427], [358, 445], [440, 467], [536, 500], [600, 529], [656, 557], [751, 612], [828, 663], [885, 706]];
const landRim = [[358, 446], [411, 463], [480, 485], [560, 518], [600, 538], [675, 579], [751, 624], [828, 674], [885, 713]];
const landLow = [[176, 551], [237, 590], [306, 633], [383, 673], [478, 717], [600, 755], [652, 770], [713, 792], [807, 819]];
const fluteTop = [[174, 558], [237, 600], [306, 641], [383, 679], [478, 722], [600, 757], [652, 771]];
const fluteLow = [[161, 591], [230, 650], [306, 697], [383, 740], [478, 778], [600, 808], [637, 812], [713, 819], [807, 819]];
const toothRim = [[159, 599], [230, 661], [306, 708], [383, 749], [478, 784], [600, 810]];
const toothLow = [[150, 626], [222, 675], [295, 717], [383, 753], [459, 777], [600, 811], [694, 821], [770, 822], [807, 819]];
const shaftEdge = [[914, 657], [899, 688], [886, 727], [876, 768], [870, 806]];
const bodyEdge = [[228, 403], [214, 434], [201, 468], [188, 511], [165, 579], [150, 626]];

const shaftStops = [[0, '#d6d6d6'], [0.12, '#e6e6e6'], [0.32, '#f8f8f8'], [0.42, '#e6e6e6'], [0.53, '#bcbcbc'], [0.68, '#858585'], [0.85, '#545454'], [1, '#464646']];
const thin = { fill: 'none', stroke: '#2a2a2a', strokeWidth: 1.1 };

const Model = () => (
  <Scene viewBox="0 200 1170 844" preserveAspectRatio="xMinYMin slice" role="img" aria-label="Model">
    <defs>
      <linearGradient id="shaftL" gradientUnits="userSpaceOnUse" x1="110" y1="398" x2="62" y2="551"><Stops list={shaftStops} /></linearGradient>
      <linearGradient id="shaftR" gradientUnits="userSpaceOnUse" x1="950" y1="663" x2="902" y2="816"><Stops list={shaftStops} /></linearGradient>
      <linearGradient id="land" gradientUnits="userSpaceOnUse" x1="400" y1="453" x2="330" y2="673">
        <Stops list={[[0, '#d8d8d8'], [0.13, '#e8e8e8'], [0.27, '#f8f8f8'], [0.42, '#e6e6e6'], [0.52, '#c0c0c0'], [0.64, '#888888'], [0.78, '#5a5a5a'], [0.88, '#4a4a4a'], [1, '#525252']]} />
      </linearGradient>
      <linearGradient id="upper" gradientUnits="userSpaceOnUse" x1="233" y1="400" x2="885" y2="600">
        <Stops list={[[0, '#dedede'], [0.2, '#ededed'], [0.36, '#ebebeb'], [0.45, '#c2c2c2'], [0.54, '#8f8f8f'], [0.66, '#6b6b6b'], [1, '#525252']]} />
      </linearGradient>
      <linearGradient id="crest" gradientUnits="userSpaceOnUse" x1="459" y1="400" x2="900" y2="660">
        <Stops list={[[0, '#e3e6e8'], [0.4, '#dadcde'], [0.7, '#efefef'], [1, '#fafafa']]} />
      </linearGradient>
      <linearGradient id="lower" gradientUnits="userSpaceOnUse" x1="161" y1="560" x2="790" y2="760">
        <Stops list={[[0, '#d9d9d9'], [0.12, '#efefef'], [0.3, '#fafafa'], [0.42, '#d6d6d6'], [0.6, '#969696'], [0.8, '#636363'], [1, '#484848']]} />
      </linearGradient>
      <linearGradient id="shadeIn" gradientUnits="userSpaceOnUse" x1="480" y1="0" x2="640" y2="0">
        <stop offset="0" stopColor="#444" stopOpacity="0" />
        <stop offset="1" stopColor="#444" />
      </linearGradient>
      <linearGradient id="rimOut" gradientUnits="userSpaceOnUse" x1="400" y1="0" x2="620" y2="0">
        <stop offset="0" stopColor="#f4f4f4" />
        <stop offset="1" stopColor="#f4f4f4" stopOpacity="0" />
      </linearGradient>
      <filter id="soft" x="-5%" y="-5%" width="110%" height="110%"><feGaussianBlur stdDeviation="1.5" /></filter>
      <clipPath id="toothClip"><path d={between(fluteLow, toothLow)} /></clipPath>
      <clipPath id="upperClip"><path d={between(crestLow, landTop)} /></clipPath>
    </defs>

    {/* left shaft */}
    <path d="M81 395L214 433 165 580 35 539Q44 450 81 395z" fill="url(#shaftL)" />
    <path d="M81 395Q67 425 61 450T35 539Q44 490 57 455 68 418 81 395z" fill="#8fa3bd" stroke="#444" strokeWidth=".8" />

    {/* upper flute and its crest */}
    <path d={between(crestLow, landTop)} fill="url(#upper)" />
    <path d={through(crestLow.slice(5))} fill="none" stroke="url(#shadeIn)" strokeWidth="5" filter="url(#soft)" clipPath="url(#upperClip)" opacity=".55" />
    <path d={between(crestTop.slice(5), crestLow.slice(5))} fill="url(#crest)" />
    <path d={between(crestIn, crestLow.slice(5))} fill="#f4f4f4" />
    <path d={through(crestLow.slice(5))} fill="none" stroke="url(#shadeIn)" strokeWidth="3" filter="url(#soft)" opacity=".6" />
    <path d={through(crestLow)} {...thin} />
    <path d={through(crestIn)} {...thin} />
    <path d={through(crestTop)} {...thin} strokeDasharray="4 1" />
    <path d="M233 407L239 392" {...thin} />

    {/* far flange */}
    <path d="M862 607L920 624 904 660 903 647z" fill="#d9dbdc" />
    <path d="M920 624Q921 640 914 657L903 661Q910 636 920 624z" fill="#6d6d6d" stroke="#333" strokeWidth=".7" />

    {/* lower tooth and flute */}
    <path d={between(fluteLow, toothLow)} fill="#565656" />
    <path d={through(toothRim)} fill="none" stroke="#1c1c1c" strokeWidth="5" filter="url(#soft)" clipPath="url(#toothClip)" />
    <path d={between(fluteLow.slice(0, 6), toothRim)} fill="url(#rimOut)" opacity=".9" />
    <path d={between(landLow, fluteLow)} fill="url(#lower)" />
    <path d={through(fluteLow)} {...thin} />
    <path d={through(toothLow)} {...thin} stroke="#444" />

    {/* centre land */}
    <path
      d={`${through([[230, 405], ...landTop.slice(1)])}L866 790 853 833 807 819${through([...landLow].reverse(), 'L')}Q196 470 230 405z`}
      fill="url(#land)"
    />
    <path d={between(landLow.slice(0, 7), fluteTop)} fill="url(#rimOut)" opacity=".85" />
    <path d={through(landLow.slice(0, 7))} fill="none" stroke="#444" strokeWidth="2" filter="url(#soft)" />
    <path d={through(fluteTop)} {...thin} />
    <path d={between(landTop.slice(2), landRim)} fill="#f6f6f6" />
    <path d={through(landTop.slice(3))} fill="none" stroke="url(#shadeIn)" strokeWidth="3" filter="url(#soft)" />
    <path d={through(landTop.slice(2))} {...thin} />
    <path d={through(landRim)} {...thin} strokeDasharray="5 1" />
    <path d={through(bodyEdge)} {...thin} />

    {/* right shaft and faces */}
    <path d="M904 643L889 684 866 790 853 833 864 808 874 790 914 657z" fill="#6a6a6a" stroke="#222" strokeWidth="1" />
    <path d="M866 800v14l7-8z" fill="#444" />
    <path d={`${through(shaftEdge)}L1082 872 1125 760V723z`} fill="url(#shaftR)" />
    <path d={through(shaftEdge)} fill="none" stroke="#777" strokeWidth="1" />
    <path d="M1126 728Q1105 770 1082 872 1100 850 1126 750z" fill="#707070" stroke="#222" strokeWidth="1" />

    {/* work and machine coordinate systems */}
    <g fontFamily="Liberation Sans, Arial, sans-serif" fontSize="14">
      <path d="M78 400L69 440 61 467" fill="none" stroke="#2d7a3a" strokeWidth="2" />
      <path d="M81 382l1 18-9-2z" fill="#125a1e" />
      <path d="M70 423L60 466 38 522" fill="none" stroke="#4f78c4" strokeWidth="3" />
      <path d="M35 511l7 3-6 12z" fill="#1648dd" stroke="#1648dd" strokeWidth="2" />
      <path d="M61 467L159 498" stroke="#cc4f4f" strokeWidth="1.2" />
      <path d="M90 474l20 10-14-2zM142 491l18 7-16-3z" fill="#e25e5e" stroke="#e25e5e" />
      <text x="57" y="379" fill="#2f8d3b">YM</text>
      <text x="51" y="418" fill="#2c45d8">ZC</text>
      <text x="50" y="431" fill="#4a9a55">YC</text>
      <text x="98" y="499" fill="#d4575a">XC</text>
      <text x="144" y="514" fill="#d4575a">XM</text>
      <text x="36" y="538" fill="#1f4fe0">ZM</text>
    </g>

    {/* view triad */}
    <g fontFamily="Liberation Sans, Arial, sans-serif" fontSize="11">
      <path d="M72 954L99 961 87 998 61 990z" fill="#d3d4d4" stroke="#999" />
      <path d="M65 971L95 982M66 977l28 6" stroke="#c49a9a" />
      <path d="M73 953L66 976" stroke="#5d8f62" strokeWidth="1.4" />
      <path d="M74 940l4 12-3 4-4-4z" fill="#176024" />
      <path d="M66 977L52 1006" stroke="#3b66dd" strokeWidth="1.4" />
      <path d="M59 987l4 4-5 10-3-3z" fill="#1746d8" />
      <path d="M93 981l8 1 8 6-12-1z" fill="#b32630" stroke="#b32630" />
      <text x="73" y="939" fill="#3c8745">Y</text>
      <text x="111" y="995" fill="#c95055">X</text>
      <text x="50" y="1008" fill="#2d52d8">Z</text>
    </g>
  </Scene>
);

/* ---------- operation navigator ---------- */

const Navigator = styled.section`
  display: flex;
  flex: 1;
  flex-direction: column;
  min-width: 0;
  margin: 32px 9px 6px 10px;
  border-left: 1px solid #d8d8d8;
  border-bottom: 4px double #a5a5a5;
  padding-bottom: 3px;
`;

const TableBox = styled.div`
  flex: 1;
  min-height: 0;
  overflow: hidden;
  border-top: 1px solid #dcdcdc;
`;

const Table = styled.table`
  width: 100%;
  height: 100%;
  table-layout: fixed;
  border-collapse: collapse;
  color: #333;
`;

const Col = styled.col`
  width: ${p => (p.$w ? `${p.$w}px` : 'auto')};
`;

const Th = styled.th`
  height: 27px;
  padding: 4px 7px 0;
  border-right: 1px solid ${p => (p.$mark ? '#333' : '#cfcfcf')};
  border-bottom: 1px solid #d0d0d0;
  background: #eeeeee;
  font-weight: 400;
  line-height: 20px;
  text-align: left;
  white-space: nowrap;
`;

const Tr = styled.tr`
  height: ${p => (p.$short ? 19 : 25)}px;
  background: ${p => (p.$odd ? '#f8f8f8' : '#fefefe')};
`;

const Td = styled.td`
  padding: 0 0 0 5px;
  border-right: 1px solid ${p => (p.$mark ? '#333' : '#e2e2e2')};
  border-bottom: 1px solid #e2e2e2;
  line-height: 20px;
  white-space: nowrap;
`;

const ScrollRow = styled.div`
  display: flex;
  flex: none;
  align-items: center;
  height: 20px;
  background: #f0f0f0;
`;

const ScrollButton = styled.button`
  display: grid;
  place-items: center;
  width: 23px;
  height: 20px;
  padding: 0;
  border: 0;
  background: none;
`;

const ScrollThumb = styled.span`
  flex: 0 0 79%;
  height: 20px;
  background: #cacaca;
`;

const op = (tool, geometry, stock) => [tool, geometry, 'METHOD', stock];
const operations = [
  ...Array(4).fill(null),
  ...Array(4).fill(op('P35R5', 'WORKPIECE', '0.3000')),
  ...Array(4).fill(op('P16R2', 'WORKPIECE', '0.3000')),
  ...Array(4).fill(op('Q6', 'MCS_MILL', '0.3000')),
  ...Array(4).fill(op('Q10', 'MCS_MILL', '0.0000')),
  ...Array(10).fill(null),
];

const OperationNavigator = () => (
  <Navigator>
    <TableBox>
      <Table>
        <colgroup>
          <Col />
          <Col $w={100} />
          <Col $w={105} />
          <Col $w={105} />
          <Col $w={105} />
          <Col $w={61} />
        </colgroup>
        <thead>
          <tr>
            <Th $mark />
            <Th>刀轨</Th>
            <Th>刀具</Th>
            <Th>几何体</Th>
            <Th>方法</Th>
            <Th>余量</Th>
          </tr>
        </thead>
        <tbody>
          {operations.map((row, i) => (
            <Tr key={i} $odd={i % 2} $short={i === operations.length - 1}>
              <Td $mark />
              <Td>
                {row && (
                  <svg width="22" height="14" viewBox="0 0 22 14" aria-hidden="true">
                    <path d="M6 8l5 5L21 2" fill="none" stroke="#5fd04a" strokeWidth="2" />
                  </svg>
                )}
              </Td>
              {[0, 1, 2, 3].map(c => <Td key={c}>{row && row[c]}</Td>)}
            </Tr>
          ))}
        </tbody>
      </Table>
    </TableBox>
    <ScrollRow>
      <ScrollButton aria-label="Scroll left"><svg width="7" height="10" aria-hidden="true"><path d="M6 1L2 5l4 4" fill="none" stroke="#333" strokeWidth="2" /></svg></ScrollButton>
      <ScrollThumb />
      <Spacer />
      <ScrollButton aria-label="Scroll right"><svg width="7" height="10" aria-hidden="true"><path d="M1 1l4 4-4 4" fill="none" stroke="#333" strokeWidth="2" /></svg></ScrollButton>
    </ScrollRow>
  </Navigator>
);

/* ---------- resource bar ---------- */

const Rail = styled.aside`
  --hole: #dadada;
  flex: none;
  width: 33px;
  margin-right: 2px;
  border-left: 1px solid #bdbdbd;
  background: #dadada;
`;

const RailButton = styled.button`
  display: grid;
  place-items: center;
  width: 32px;
  height: ${p => (p.$small ? 26 : 44)}px;
  margin-top: ${p => p.$gap || 0}px;
  padding: 0 6px 0 0;
  border: 0;
  background: ${p => (p.$active ? '#fefefe' : 'none')};
`;

const railTabs = [
  ['gear'], ['assembly', 17], ['constraint'], ['partNav'], ['opNav', 1], ['feature', 1], ['machineNav'],
  ['books', 1], ['feed', 12], ['web', 12], ['clock', 12], ['spectrum'], ['millWand', 1], ['robot'], ['roles'], ['clock'],
];

/* ---------- dialog ---------- */

const Dialog = styled.form`
  position: absolute;
  left: 1124px;
  top: 57px;
  width: 398px;
  border: 1px solid #c4c4c4;
  border-top: 0;
  background: #e6e6e6;
  box-shadow: 0 0 3px rgba(0, 0, 0, 0.25);
`;

const DialogTitle = styled.div`
  --hole: #5a8780;
  display: flex;
  align-items: center;
  height: 28px;
  margin: 0 -1px;
  padding: 0 6px 0 10px;
  gap: 10px;
  background: #5a8780;
  color: #fff;
  font-size: 17px;
  white-space: pre;
`;

const DialogName = styled.span`
  flex: 1;
`;

const CloseButton = styled(WindowButton)`
  width: 22px;
  color: #fff;
`;

const DialogBody = styled.div`
  display: flex;
  flex-direction: column;
  gap: 4px;
  padding: 4px 5px 0;
`;

const Section = styled.section`
  padding: 0 5px ${p => (p.$open ? 7 : 0)}px 7px;
  background: #fefefe;
  box-shadow: 0 1px 1px #c8c8c8;
`;

const SectionHead = styled.button`
  display: flex;
  align-items: center;
  justify-content: space-between;
  width: 100%;
  height: 29px;
  padding: 0;
  border: 0;
  background: none;
  color: #3a87a5;
  font-size: 19px;
  line-height: 28px;
`;

const SectionRows = styled.div`
  display: flex;
  flex-direction: column;
  gap: 2px;
  padding: 7px 4px 0 1px;
`;

const Field = styled.div`
  display: flex;
  gap: 2px;
  height: 34px;
`;

const FieldLabel = styled.label`
  flex: 1;
  padding-top: ${p => p.$drop || 0}px;
  line-height: 29px;
`;

const SquareButton = styled.button`
  display: grid;
  place-items: center;
  flex: none;
  width: 34px;
  height: 34px;
  padding: 0;
  border: 1px solid ${p => (p.$off ? '#d0d0d0' : '#a9a9a9')};
  background: #fefefe;
`;

const SelectGap = styled.span`
  display: flex;
  align-items: flex-start;
  padding-right: 1px;
`;

const ActionRow = styled.div`
  display: flex;
  justify-content: center;
  gap: 2px;
  padding: 5px 3px 1px 0;
`;

const DialogFooter = styled.div`
  display: flex;
  justify-content: flex-end;
  gap: 6px;
  padding: 13px 15px 11px;
`;

const FooterButton = styled.button`
  width: 63px;
  height: 29px;
  padding: 0;
  border: 1px solid ${p => (p.$primary ? '#6ba4c4' : '#b0b0b5')};
  background: ${p => (p.$primary ? '#96cae5' : '#c9c9cf')};
  line-height: 24px;
`;

const Cursor = styled.svg`
  position: absolute;
  left: 104px;
  top: 10px;
`;

const Fold = ({ title, open, children }) => (
  <Section $open={open}>
    <SectionHead type="button" aria-expanded={!!open}>
      {title}
      <svg width="16" height="13" viewBox="0 0 16 13" aria-hidden="true">
        <path d={open ? 'M2 12L8 3l6 9' : 'M2 1l6 9 6-9'} fill="none" stroke="#3a87a5" strokeWidth="3" />
      </svg>
    </SectionHead>
    {children}
  </Section>
);

const Square = ({ name, off }) => (
  <SquareButton type="button" $off={off} aria-label={name}><Icon name={name} off={off} /></SquareButton>
);

const OperationDialog = () => (
  <Dialog onSubmit={e => e.preventDefault()}>
    <DialogTitle>
      <Icon name="gear" size={16} />
      <DialogName>可变轮廓铣 - [VARIABLE_CONTOUR_3]</DialogName>
      <CloseButton type="button" aria-label="Close"><WinGlyph kind="close" size={13} /></CloseButton>
    </DialogTitle>
    <DialogBody>
      <Fold title="几何体" open>
        <SectionRows>
          <Field>
            <FieldLabel htmlFor="geometry">几何体</FieldLabel>
            <SelectGap><Dropdown id="geometry" value="MCS_MILL" w={136} picked /></SelectGap>
            <Square name="geomNew" />
            <Square name="wrench" />
          </Field>
          {[['指定部件', 'part'], ['指定检查', 'check'], ['指定切削区域', 'cutArea']].map(([text, icon]) => (
            <Field key={icon}>
              <FieldLabel as="span" $drop={6}>{text}</FieldLabel>
              <Square name={icon} />
              <Square name="torch" off />
            </Field>
          ))}
        </SectionRows>
      </Fold>
      <Fold title="驱动方法" open>
        <SectionRows>
          <Field>
            <FieldLabel htmlFor="drive">方法</FieldLabel>
            <Dropdown id="drive" value="边界" w={160} />
            <Square name="wrench" />
          </Field>
        </SectionRows>
      </Fold>
      <Fold title="投影矢量" />
      <Fold title="工具" />
      <Fold title="刀轴" />
      <Fold title="刀轨设置" open>
        <SectionRows>
          <Field>
            <FieldLabel htmlFor="method">方法</FieldLabel>
            <SelectGap><Dropdown id="method" value="METHOD" w={136} /></SelectGap>
            <Square name="methodNew" />
            <Square name="wrench" off />
          </Field>
          {[['切削参数', 'cutParam'], ['非切削移动', 'nonCut'], ['进给率和速度', 'feeds']].map(([text, icon]) => (
            <Field key={icon}>
              <FieldLabel as="span" $drop={2}>{text}</FieldLabel>
              <Square name={icon} />
            </Field>
          ))}
        </SectionRows>
      </Fold>
      <Fold title="机床控制" />
      <Fold title="程序" />
      <Fold title="描述" />
      <Fold title="选项" />
      <Fold title="操作" open>
        <ActionRow>
          <Square name="mill" />
          <Square name="gen" off />
          <Square name="verify" off />
          <Square name="post" off />
        </ActionRow>
      </Fold>
    </DialogBody>
    <DialogFooter>
      <FooterButton type="submit" $primary>确定</FooterButton>
      <FooterButton type="button">取消</FooterButton>
    </DialogFooter>
    <Cursor width="34" height="34" viewBox="0 0 34 34" aria-hidden="true">
      <circle cx="15" cy="14" r="11" fill="none" stroke="#c5282d" strokeWidth="3.4" />
      <path
        d="M17 1l6 6h-4v7h8v-4l6 6-6 6v-4h-8v8h4l-6 5-6-5h4v-8H7v4l-6-6 6-6v4h8V7h-4z"
        fill="#fff"
        stroke="#222"
        strokeWidth="1"
      />
    </Cursor>
  </Dialog>
);

/* ---------- floating extras ---------- */

const SpeedBall = styled.div`
  position: absolute;
  right: -34px;
  top: 957px;
  width: 60px;
  height: 60px;
  padding-left: 5px;
  border: 2px solid #f3f5f3;
  border-radius: 50%;
  background: radial-gradient(circle at 50% 20%, #7fe08c, #3dbb52 50%, #2c9a42);
  box-shadow: 0 0 2px #555;
  color: #fff;
  font: 700 15px/56px "Open Sans", sans-serif;
`;

const Ime = styled.div`
  position: absolute;
  right: 2px;
  bottom: -1px;
  width: 132px;
  height: 58px;
  padding: 5px 4px 4px 5px;
  border: 1px solid #222;
  background: #f6f3f3;
`;

const ImeInner = styled.div`
  display: grid;
  grid-template-columns: 27px 30px 1fr;
  grid-template-rows: 22px 22px;
  width: 100%;
  height: 47px;
  padding: 1px 4px 0 15px;
  border: 1px solid #222;
  color: #666;
  font-size: 13px;
  line-height: 22px;
`;

const ImeSlogan = styled.span`
  grid-row: 1 / span 2;
  grid-column: 3;
  font-size: 18px;
  font-weight: 300;
`;

const bottomView = ['layers', 'layers', 'v', 'wcs', 'v', '|', 'showHand', 'palette', '|', 'moveObj', 'v', 'hideObj', 'showObj', 'swapObj', '|', 'curve', 'v', 'measure', 'V'];
const bottomModel = ['analysis', 'v', '~plus', 'v', '~extrude', 'v', '~boss', 'blockBody', '~meshBody', 'v', 'V'];
const bottomNav = ['~viewProgram', '~viewTool', '~viewGeom', '~viewMethod', 'V'];

class App extends React.Component { // eslint-disable-line react/prefer-stateless-function
  render() {
    return (
      <Screen>
        <GlobalStyle />
        <TitleBar>
          <Logo>NX</Logo>
          <Title>NX 10 - 加工 - [4轴-4.prt （修改的） ]</Title>
          <Brand>SIEMENS</Brand>
          <WindowButtons />
        </TitleBar>
        <MenuBar>
          <Icon name="mill" size={22} />
          <MenuList>
            {menus.map(([text, key, gap]) => (
              <MenuItem key={text} $gap={gap}>{text}{key && <span>(<u>{key}</u>)</span>}</MenuItem>
            ))}
          </MenuList>
          <WindowButtons inner />
        </MenuBar>
        <Bar>
          <Group $w={687}>
            <Grip />
            <StartButton><Icon name="globe" />启动<Caret /></StartButton>
            <Tools items={standardTools} />
            <SearchBox>
              <SearchInput type="text" placeholder="查找命令" aria-label="查找命令" />
              <svg width="16" height="16" viewBox="0 0 16 16" fill="none" stroke="#444" aria-hidden="true">
                <circle cx="10" cy="6" r="4.6" strokeWidth="1.4" />
                <path d="M7 9l-6 6" strokeWidth="2.4" />
              </svg>
            </SearchBox>
            <Tools items={['V']} />
          </Group>
          <Group $w={353}><Grip /><Tools items={viewTools} /></Group>
          <Group $w={110}><Grip /><Tools items={plugTools} /></Group>
        </Bar>
        <Bar>
          <Group $w={186}><Grip /><Tools items={insertTools} /></Group>
          <Group $w={317}><Grip /><Tools items={editTools} /></Group>
          <Group $w={322}><Grip /><Tools items={opTools} /></Group>
          <Group $w={690}><Grip /><Tools items={pathTools} /></Group>
          <Group $w={151}><Tools items={machineTools} /></Group>
        </Bar>
        <SelectionBar>
          <Dropdown label="类型过滤器" value="" w={175} h={26} off />
          <Dropdown label="选择范围" value="整个装配" w={185} h={26} size={15} off />
          <SelectionTools><Tools items={selectionTools} /></SelectionTools>
          <Spacer />
          <Tools items={['V']} />
        </SelectionBar>
        <CueLine>
          <Cue>指定参数</Cue>
          <span>当前：VARIABLE_CONTOUR_3</span>
          <Spacer />
          <Icon name="dock" size={16} />
        </CueLine>
        <Main>
          <Viewport><Model /></Viewport>
          <OperationNavigator />
          <Rail>
            {railTabs.map(([name, gap], i) => (
              <RailButton key={i} $gap={gap} $small={name === 'gear'} $active={name === 'opNav'} aria-label={name}>
                <Icon name={name} size={name === 'gear' ? 14 : 24} />
              </RailButton>
            ))}
          </Rail>
        </Main>
        <Bar>
          <Group $w={521} $bottom>
            <Grip />
            <Dropdown label="图层" value="5" w={63} h={25} />
            <Tools items={bottomView} />
          </Group>
          <Group $w={270} $bottom><Grip /><Tools items={bottomModel} /></Group>
          <Group $w={157} $bottom><Grip /><Tools items={bottomNav} /></Group>
        </Bar>
        <OperationDialog />
        <SpeedBall>55</SpeedBall>
        <Ime>
          <ImeInner>
            <span>中</span>
            <span>°，</span>
            <span>简</span>
            <svg width="16" height="20" viewBox="0 0 16 20" aria-hidden="true">
              <path d="M1 6l5-3q2 2 4 0l5 3-1 4h-2v7H4v-7H2z" fill="#666" />
            </svg>
            <ImeSlogan>时光<br />静好</ImeSlogan>
          </ImeInner>
        </Ime>
      </Screen>
    );
  }
}

export default App;
